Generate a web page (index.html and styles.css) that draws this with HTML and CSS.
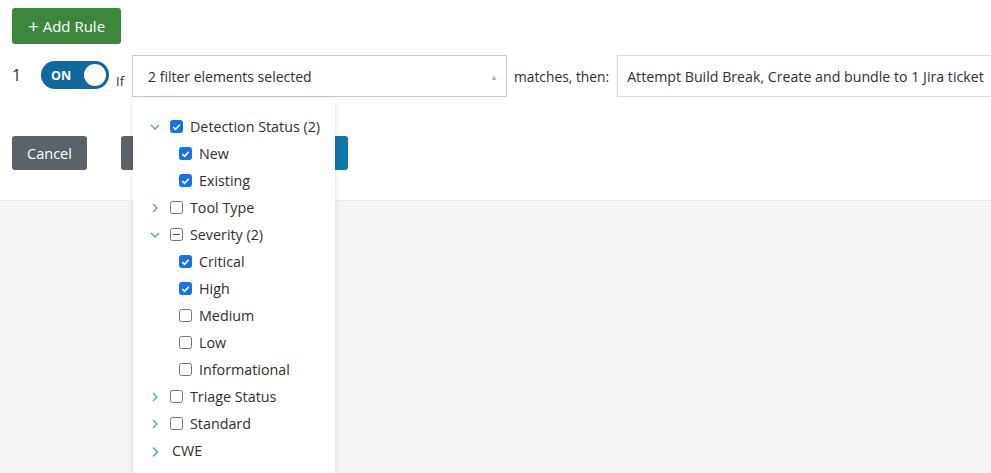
FILE: index.html
```html
<!DOCTYPE html>
<html>
<head>
<meta charset="utf-8">
<link rel="stylesheet" href="styles.css">
</head>
<body>
<div class="top">
  <button class="btn btn-add"><span class="plus">+</span> Add Rule</button>
  <div class="rule-row">
    <span class="rule-num">1</span>
    <span class="toggle"><span class="toggle-label">ON</span><span class="knob"></span></span>
    <span class="if">If</span>
    <div class="select-wrap">
      <div class="select">
        <span>2 filter elements selected</span>
        <span class="caret">&#9650;</span>
      </div>
      <div class="dropdown">
        <div class="item lvl1"><svg class="chev" viewBox="0 0 10 10"><path d="M1 3 L5 7 L9 3" /></svg><span class="cb checked"><svg viewBox="0 0 12 12"><path d="M2.5 6.2 L5 8.6 L9.6 3.6"/></svg></span><span>Detection Status (2)</span></div>
        <div class="item lvl2"><span class="cb checked"><svg viewBox="0 0 12 12"><path d="M2.5 6.2 L5 8.6 L9.6 3.6"/></svg></span><span>New</span></div>
        <div class="item lvl2"><span class="cb checked"><svg viewBox="0 0 12 12"><path d="M2.5 6.2 L5 8.6 L9.6 3.6"/></svg></span><span>Existing</span></div>
        <div class="item lvl1"><svg class="chev" viewBox="0 0 10 10"><path d="M3 1 L7 5 L3 9" /></svg><span class="cb"></span><span>Tool Type</span></div>
        <div class="item lvl1"><svg class="chev" viewBox="0 0 10 10"><path d="M1 3 L5 7 L9 3" /></svg><span class="cb indet"><span class="dash"></span></span><span>Severity (2)</span></div>
        <div class="item lvl2"><span class="cb checked"><svg viewBox="0 0 12 12"><path d="M2.5 6.2 L5 8.6 L9.6 3.6"/></svg></span><span>Critical</span></div>
        <div class="item lvl2"><span class="cb checked"><svg viewBox="0 0 12 12"><path d="M2.5 6.2 L5 8.6 L9.6 3.6"/></svg></span><span>High</span></div>
        <div class="item lvl2"><span class="cb"></span><span>Medium</span></div>
        <div class="item lvl2"><span class="cb"></span><span>Low</span></div>
        <div class="item lvl2"><span class="cb"></span><span>Informational</span></div>
        <div class="item lvl1"><svg class="chev" viewBox="0 0 10 10"><path d="M3 1 L7 5 L3 9" /></svg><span class="cb"></span><span>Triage Status</span></div>
        <div class="item lvl1"><svg class="chev" viewBox="0 0 10 10"><path d="M3 1 L7 5 L3 9" /></svg><span class="cb"></span><span>Standard</span></div>
        <div class="item lvl1 nocb"><svg class="chev big" viewBox="0 0 10 12"><path d="M3 1.5 L7.5 6 L3 10.5" /></svg><span>CWE</span></div>
      </div>
    </div>
    <span class="matches">matches, then:</span>
    <div class="action-input">Attempt Build Break, Create and bundle to 1 Jira ticket</div>
  </div>
  <div class="actions">
    <button class="btn btn-cancel">Cancel</button>
    <button class="btn btn-draft" aria-label="Save draft"></button>
    <button class="btn btn-save" aria-label="Save"></button>
  </div>
</div>
<div class="bottom"></div>
</body>
</html>
```
FILE: styles.css
```css
html, body {
  margin: 0;
  padding: 0;
  height: 100%;
  overflow: hidden;
}
body {
  font-family: "Open Sans", "Noto Sans", sans-serif;
  font-size: 14px;
  color: #2f2f2f;
  background: #f5f5f7;
  display: flex;
  flex-direction: column;
}
.top {
  background: #fff;
  height: 201px;
  box-sizing: border-box;
  padding: 8px 0 0 12px;
  border-bottom: 1px solid #ececef;
  flex: none;
}
.bottom {
  flex: 1;
}
.btn {
  font-family: inherit;
  font-size: 14.5px;
  color: #fff;
  border: none;
  border-radius: 3px;
  cursor: pointer;
  padding: 0;
}
.btn-add {
  background: #3b883d;
  width: 109px;
  height: 36px;
  display: block;
  font-size: 15px;
}
.btn-add .plus {
  font-size: 19px;
  line-height: 1;
  vertical-align: -1px;
}
.rule-row {
  display: flex;
  align-items: center;
  margin-top: 11px;
  height: 42px;
  white-space: nowrap;
}
.rule-row > * {
  flex: none;
}
.rule-num {
  font-size: 16px;
  width: 29px;
  margin-top: -2px;
}
.toggle {
  width: 68px;
  height: 28px;
  border-radius: 14px;
  background: #10689c;
  display: flex;
  align-items: center;
  justify-content: space-between;
  box-sizing: border-box;
  padding: 0 3px 0 10px;
  margin-top: -2px;
}
.toggle-label {
  color: #fff;
  font-weight: 700;
  font-size: 12.5px;
}
.knob {
  width: 22px;
  height: 22px;
  border-radius: 50%;
  background: #fff;
}
.if {
  margin-left: 7px;
  width: 16px;
  align-self: flex-end;
  margin-bottom: 7px;
  font-size: 13px;
}
.select-wrap {
  position: relative;
}
.select {
  width: 375px;
  height: 42px;
  box-sizing: border-box;
  border: 1px solid #c9c9c9;
  display: flex;
  align-items: center;
  justify-content: space-between;
  padding: 0 8px 0 15px;
  background: #fff;
}
.caret {
  font-size: 8px;
  color: #b5b5b5;
}
.dropdown {
  position: absolute;
  left: 1px;
  top: 43px;
  width: 202px;
  height: 375px;
  background: #fff;
  box-shadow: 0 2px 6px rgba(0,0,0,0.12);
  padding-top: 15px;
  box-sizing: border-box;
  z-index: 5;
}
.item {
  height: 27px;
  display: flex;
  align-items: center;
  font-size: 14.3px;
}
.item.lvl1 {
  padding-left: 17px;
}
.item.lvl2 {
  padding-left: 46px;
}
.chev {
  width: 10px;
  height: 10px;
  margin-right: 10px;
  flex: none;
}
.chev path {
  fill: none;
  stroke: #4c9fd3;
  stroke-width: 1.3;
}
.chev.big {
  width: 10px;
  height: 12px;
  margin-right: 12px;
  margin-top: 3px;
}
.chev.big path {
  stroke-width: 1.5;
}
.cb {
  width: 13px;
  height: 13px;
  box-sizing: border-box;
  border: 1px solid #767676;
  border-radius: 2.5px;
  margin-right: 7px;
  flex: none;
  display: flex;
  align-items: center;
  justify-content: center;
  background: #fff;
}
.cb.checked {
  background: #1871e6;
  border-color: #1871e6;
}
.cb svg {
  width: 12px;
  height: 12px;
}
.cb svg path {
  fill: none;
  stroke: #fff;
  stroke-width: 1.8;
}
.cb .dash {
  width: 7px;
  height: 1px;
  background: #555;
}
.matches {
  margin-left: 7px;
  font-size: 13.8px;
}
.action-input {
  margin-left: 8px;
  height: 42px;
  width: 420px;
  box-sizing: border-box;
  border: 1px solid #dcdcdc;
  padding-left: 9px;
  display: flex;
  align-items: center;
  background: #fff;
  font-size: 14.2px;
}
.actions {
  display: flex;
  margin-top: 39px;
  gap: 34px;
}
.actions .btn {
  height: 34px;
}
.btn-cancel {
  background: #5b636a;
  width: 75px;
}
.btn-draft {
  background: #5b636a;
  width: 100px;
}
.btn-save {
  background: #0e76a8;
  width: 100px;
  margin-left: -7px;
}
```
